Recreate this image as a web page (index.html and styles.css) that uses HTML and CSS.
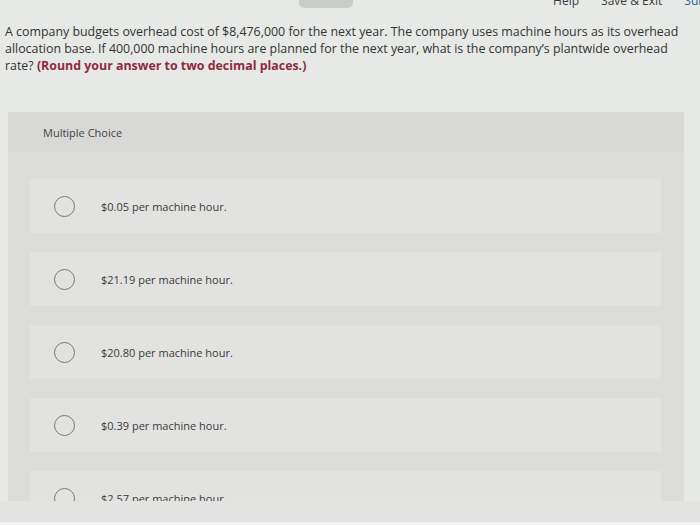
FILE: index.html
```html
<!DOCTYPE html>
<html lang="en">
<head>
<meta charset="utf-8">
<title>Multiple Choice</title>
<link rel="stylesheet" href="styles.css">
</head>
<body>
<header class="topbar">
  <span class="tab"></span>
  <nav class="links">
    <span class="link">Help</span>
    <span class="link">Save &amp; Exit</span>
    <span class="link submit">Submit</span>
  </nav>
</header>

<p class="question">A company budgets overhead cost of $8,476,000 for the next year. The company uses machine hours as its overhead allocation base. If 400,000 machine hours are planned for the next year, what is the company’s plantwide overhead rate? <strong class="hint">(Round your answer to two decimal places.)</strong></p>

<section class="panel">
  <div class="panel-head">Multiple Choice</div>
  <ul class="options">
    <li class="option"><span class="radio"></span><span class="label">$0.05 per machine hour.</span></li>
    <li class="option"><span class="radio"></span><span class="label">$21.19 per machine hour.</span></li>
    <li class="option"><span class="radio"></span><span class="label">$20.80 per machine hour.</span></li>
    <li class="option"><span class="radio"></span><span class="label">$0.39 per machine hour.</span></li>
    <li class="option"><span class="radio"></span><span class="label">$2.57 per machine hour.</span></li>
  </ul>
</section>

<footer class="footer"></footer>
</body>
</html>
```

FILE: styles.css
```css
html, body {
  margin: 0;
  padding: 0;
}

body {
  width: 700px;
  height: 525px;
  overflow: hidden;
  background: #e7e9e7;
  font-family: "Open Sans", "Liberation Sans", sans-serif;
  color: #363636;
}

.topbar {
  height: 8px;
  display: flex;
  align-items: flex-end;
  overflow: hidden;
}

.tab {
  display: block;
  width: 54px;
  height: 8px;
  margin-left: 299px;
  background: #cbcdcb;
  border-radius: 0 0 5px 5px;
  align-self: flex-start;
}

.links {
  display: flex;
  margin-left: auto;
  gap: 22px;
  font-size: 12px;
  line-height: 12px;
  color: #3a3a3a;
  margin-bottom: 1px;
  white-space: nowrap;
  margin-right: -24px;
}

.link.submit {
  color: #2a5d9e;
}

.question {
  margin: 15px 0 0 5px;
  width: 690px;
  font-size: 12.4px;
  line-height: 17px;
  color: #333;
}

.hint {
  color: #8f2a3f;
  font-weight: 700;
}

.panel {
  margin: 38px 0 0 8px;
  width: 676px;
  background: #dcdddb;
  padding-bottom: 40px;
}

.panel-head {
  height: 40px;
  display: flex;
  align-items: center;
  padding-left: 35px;
  font-size: 11px;
  color: #444;
  background: #d8d9d7;
}

.options {
  list-style: none;
  margin: 27px 23px 0 22px;
  padding: 0;
  display: flex;
  flex-direction: column;
  gap: 19px;
}

.option {
  height: 54px;
  background: #e2e3e1;
  display: flex;
  align-items: center;
  padding-left: 24px;
}

.radio {
  width: 19px;
  height: 19px;
  border: 1.5px solid #787878;
  border-radius: 50%;
  flex: none;
}

.label {
  margin-left: 26px;
  font-size: 11px;
  color: #3a3a3a;
}

.footer {
  position: fixed;
  left: 0;
  right: 0;
  bottom: 0;
  height: 24px;
  background: #e3e4e2;
  border-bottom: 3px solid #f2f3f2;
  box-sizing: border-box;
}
```
